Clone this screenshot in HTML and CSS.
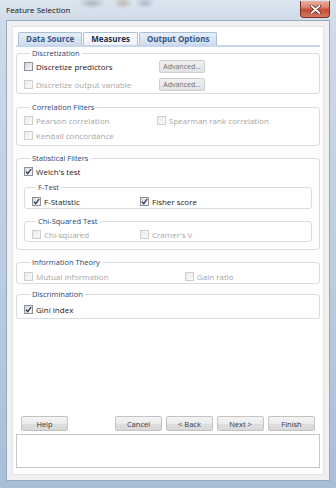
FILE: index.html
```html
<!DOCTYPE html>
<html>
<head>
<meta charset="utf-8">
<title>Feature Selection</title>
<link rel="stylesheet" href="styles.css">
</head>
<body>
<div class="window">
  <div class="titlebar">
    <span class="title">Feature Selection</span>
    <span class="close"><svg width="11" height="9" viewBox="0 0 11 9"><path d="M1.5 1 L9.5 8 M9.5 1 L1.5 8" stroke="#5a1a12" stroke-width="3.2" stroke-linecap="round"/><path d="M1.5 1 L9.5 8 M9.5 1 L1.5 8" stroke="#ffffff" stroke-width="1.8" stroke-linecap="round"/></svg></span>
  </div>
  <div class="client">
    <div class="page">
      <div class="tabs">
        <span class="tab">Data Source</span>
        <span class="tab active">Measures</span>
        <span class="tab">Output Options</span>
      </div>
      <div class="panel">
        <fieldset class="group g-disc">
          <legend>Discretization</legend>
          <div class="row r16 cols-disc">
            <label class="opt"><span class="cb"></span>Discretize predictors</label>
            <button class="adv">Advanced...</button>
          </div>
          <div class="row r16 cols-disc gap2">
            <label class="opt off"><span class="cb"></span>Discretize output variable</label>
            <button class="adv">Advanced...</button>
          </div>
        </fieldset>

        <fieldset class="group g-corr">
          <legend>Correlation Filters</legend>
          <div class="row r15 cols-corr">
            <label class="opt off"><span class="cb"></span>Pearson correlation</label>
            <label class="opt off"><span class="cb"></span>Spearman rank correlation</label>
          </div>
          <div class="row r15 cols-corr">
            <label class="opt off"><span class="cb"></span>Kendall concordance</label>
          </div>
        </fieldset>

        <fieldset class="group g-stat">
          <legend>Statistical Filters</legend>
          <div class="row r15 welch">
            <label class="opt"><span class="cb on"><svg width="9" height="9" viewBox="0 0 9 9"><path d="M2 4.7 L3.7 6.7 L7.2 2" fill="none" stroke="#27324a" stroke-width="1.25"/></svg></span>Welch's test</label>
          </div>
          <fieldset class="group sub g-ftest">
            <legend>F-Test</legend>
            <div class="row r14 cols-sub">
              <label class="opt"><span class="cb on"><svg width="9" height="9" viewBox="0 0 9 9"><path d="M2 4.7 L3.7 6.7 L7.2 2" fill="none" stroke="#27324a" stroke-width="1.25"/></svg></span>F-Statistic</label>
              <label class="opt"><span class="cb on"><svg width="9" height="9" viewBox="0 0 9 9"><path d="M2 4.7 L3.7 6.7 L7.2 2" fill="none" stroke="#27324a" stroke-width="1.25"/></svg></span>Fisher score</label>
            </div>
          </fieldset>
          <fieldset class="group sub g-chi">
            <legend>Chi-Squared Test</legend>
            <div class="row r13 cols-sub">
              <label class="opt off"><span class="cb"></span>Chi-squared</label>
              <label class="opt off"><span class="cb"></span>Cramer's V</label>
            </div>
          </fieldset>
        </fieldset>

        <fieldset class="group g-info">
          <legend>Information Theory</legend>
          <div class="row r14 cols-info">
            <label class="opt off"><span class="cb"></span>Mutual information</label>
            <label class="opt off"><span class="cb"></span>Gain ratio</label>
          </div>
        </fieldset>

        <fieldset class="group g-discr">
          <legend>Discrimination</legend>
          <div class="row r16">
            <label class="opt"><span class="cb on"><svg width="9" height="9" viewBox="0 0 9 9"><path d="M2 4.7 L3.7 6.7 L7.2 2" fill="none" stroke="#27324a" stroke-width="1.25"/></svg></span>Gini index</label>
          </div>
        </fieldset>
      </div>

      <div class="buttons">
        <button class="btn help">Help</button>
        <div class="nav">
          <button class="btn">Cancel</button>
          <button class="btn">&lt; Back</button>
          <button class="btn">Next &gt;</button>
          <button class="btn">Finish</button>
        </div>
      </div>
      <div class="log"></div>
    </div>
  </div>
</div>
</body>
</html>
```

FILE: styles.css
```css
* { box-sizing: border-box; }
html, body { margin: 0; padding: 0; }
body {
  width: 336px;
  height: 488px;
  overflow: hidden;
  font-family: "Open Sans", "DejaVu Sans", sans-serif;
  font-size: 8px;
  color: #1c1c1c;
}

.window {
  height: 488px;
  display: flex;
  flex-direction: column;
  background:
    radial-gradient(ellipse 14px 6px at 92px 3px, rgba(90,100,115,0.35), transparent),
    radial-gradient(ellipse 10px 6px at 123px 3px, rgba(140,110,60,0.35), transparent),
    radial-gradient(ellipse 10px 6px at 145px 3px, rgba(70,90,120,0.3), transparent),
    linear-gradient(to bottom, #dbe5ef 0px, #cfdbe8 22px, #b9cbdf 60%, #a9bfd7 100%);
}

.titlebar {
  height: 20px;
  display: flex;
  justify-content: space-between;
  align-items: flex-start;
  padding-left: 6px;
}
.title {
  font-size: 8px;
  line-height: 20px;
  color: #101010;
}
.close {
  width: 30px;
  height: 17px;
  margin: 1px 6px 0 0;
  border: 1px solid #7b3226;
  border-top: none;
  border-radius: 0 0 4px 4px;
  background: linear-gradient(to bottom, #eab0a2 0%, #d9826e 40%, #c54a32 55%, #d47a62 100%);
  display: flex;
  align-items: center;
  justify-content: center;
}

.client {
  flex: 1;
  margin: 0 6px 7px 6px;
  border: 1px solid #96a9be;
  background: #f0f0f0;
  padding: 5px;
  display: flex;
}
.page {
  flex: 1;
  background: #ffffff;
  border: 1px solid #e4e4e4;
  padding: 5px 3px 6px 3px;
  display: flex;
  flex-direction: column;
}

.tabs {
  display: flex;
  gap: 1px;
  padding-left: 2px;
  height: 15px;
  border-bottom: 2px solid #c6d6ec;
}
.tab {
  padding: 0 7px;
  height: 13px;
  line-height: 12px;
  border: 1px solid #a9bed9;
  border-bottom: none;
  border-radius: 2px 2px 0 0;
  background: linear-gradient(to bottom, #e6eef8, #cfdcee);
  color: #34568a;
  font-weight: bold;
  font-size: 8px;
}
.tab.active {
  background: linear-gradient(to bottom, #fbfcfe, #eef3f9);
  color: #1d2d4a;
}

.panel {
  display: flex;
  flex-direction: column;
  margin-top: 1px;
}

.group {
  margin: 0;
  padding: 0 7px;
  border: 1px solid #d7dde3;
  border-radius: 3px;
  min-width: 0;
}
.group legend {
  margin-left: 6px;
  padding: 0 2px;
  font-size: 7.5px;
  line-height: 10px;
  color: #2a4670;
}
.group.sub legend { margin-left: 4px; }

.g-disc { padding-bottom: 1px; }
.g-corr { margin-top: 8px; padding-top: 1px; padding-bottom: 2px; }
.g-stat { margin-top: 7px; padding-top: 1px; padding-bottom: 7px; }
.g-ftest { margin-top: 3px; padding-top: 2px; padding-bottom: 0; }
.g-chi { margin-top: 7px; padding-top: 2px; padding-bottom: 0; }
.g-info { margin-top: 7px; padding-top: 2px; padding-bottom: 0; }
.g-discr { margin-top: 5px; padding-top: 2px; padding-bottom: 1px; }

.row {
  display: grid;
  align-items: center;
}
.r16 { height: 16px; }
.r15 { height: 15px; }
.r14 { height: 14px; }
.r13 { height: 13px; }
.gap2 { margin-top: 2px; }
.cols-disc { grid-template-columns: 135px auto; justify-items: start; }
.cols-corr { grid-template-columns: 133px auto; }
.cols-sub { grid-template-columns: 108px auto; }
.cols-info { grid-template-columns: 161px auto; }

.opt {
  display: inline-flex;
  align-items: center;
  gap: 3px;
  font-size: 8px;
  color: #1c1c1c;
  white-space: nowrap;
}
.opt.off { color: #a6a6a6; }

.cb {
  width: 9px;
  height: 9px;
  border: 1px solid #8f9399;
  background: linear-gradient(135deg, #d6d8dc, #f6f6f6);
  display: inline-flex;
  align-items: center;
  justify-content: center;
  flex: none;
}
.cb svg { display: block; margin: -1px; }
.opt.off .cb {
  border-color: #cfcfcf;
  background: linear-gradient(135deg, #ececec, #f9f9f9);
}

.adv {
  width: 46px;
  height: 13px;
  padding: 0;
  border: 1px solid #cfcfcf;
  border-radius: 2px;
  background: linear-gradient(to bottom, #f0f0f0, #e2e2e2);
  font-family: inherit;
  font-size: 7px;
  color: #707070;
}

.buttons {
  margin-top: auto;
  display: flex;
  justify-content: space-between;
  padding: 0 5px;
}
.nav {
  display: flex;
  gap: 4px;
}
.btn {
  width: 47px;
  height: 15px;
  padding: 0;
  border: 1px solid #c3c3c3;
  border-radius: 2px;
  background: linear-gradient(to bottom, #f4f4f4 0%, #ebebeb 50%, #dedede 51%, #d9d9d9 100%);
  font-family: inherit;
  font-size: 7.5px;
  color: #3a3a3a;
}

.log {
  margin-top: 3px;
  height: 34px;
  border: 1px solid #c7c7c7;
  background: #ffffff;
}
```
